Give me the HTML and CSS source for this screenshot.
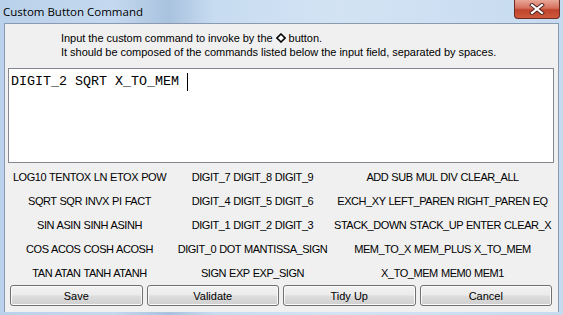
FILE: index.html
```html
<!DOCTYPE html>
<html lang="en">

<head>
    <meta charset="UTF-8">
    <title>Custom Button Command</title>
    <link rel="stylesheet" href="styles.css">
</head>

<body>

    <div class="window">
        <div class="titlebar">
            <span class="title">Custom Button Command</span>
            <div class="close">
                <svg width="16" height="12" viewBox="0 0 16 12">
                    <path d="M3 2 L13 10 M13 2 L3 10" stroke="#4a2020" stroke-width="4" stroke-linecap="square" />
                    <path d="M3 2 L13 10 M13 2 L3 10" stroke="#fff" stroke-width="2.2" stroke-linecap="square" />
                </svg>
            </div>
        </div>

        <div class="client">
            <div class="intro">
                <p>Input the custom command to invoke by the
                    <svg class="diamond" width="10" height="10" viewBox="0 0 10 10">
                        <path d="M5 1 L9 5 L5 9 L1 5 Z" fill="#fff" stroke="#000" stroke-width="1.6" />
                    </svg>
                    button.</p>
                <p>It should be composed of the commands listed below the input field, separated by spaces.</p>
            </div>

            <div class="editor">
                <span class="command">DIGIT_2 SQRT X_TO_MEM </span><span class="caret"></span>
            </div>

            <div class="commands">
                <span>LOG10 TENTOX LN ETOX POW</span>
                <span>DIGIT_7 DIGIT_8 DIGIT_9</span>
                <span>ADD SUB MUL DIV CLEAR_ALL</span>

                <span>SQRT SQR INVX PI FACT</span>
                <span>DIGIT_4 DIGIT_5 DIGIT_6</span>
                <span>EXCH_XY LEFT_PAREN RIGHT_PAREN EQ</span>

                <span>SIN ASIN SINH ASINH</span>
                <span>DIGIT_1 DIGIT_2 DIGIT_3</span>
                <span>STACK_DOWN STACK_UP ENTER CLEAR_X</span>

                <span>COS ACOS COSH ACOSH</span>
                <span>DIGIT_0 DOT MANTISSA_SIGN</span>
                <span>MEM_TO_X MEM_PLUS X_TO_MEM</span>

                <span>TAN ATAN TANH ATANH</span>
                <span>SIGN EXP EXP_SIGN</span>
                <span>X_TO_MEM MEM0 MEM1</span>
            </div>

            <div class="buttons">
                <button type="button">Save</button>
                <button type="button">Validate</button>
                <button type="button">Tidy Up</button>
                <button type="button">Cancel</button>
            </div>
        </div>
    </div>

</body>

</html>
```

FILE: styles.css
```css
body {
    margin: 0;
    padding: 0;
    background-color: #fff;
    font-family: Tahoma, "Liberation Sans", Arial, sans-serif;
}

.window {
    width: 563px;
    height: 315px;
    box-sizing: border-box;
    padding: 0 4px 3px 4px;
    display: flex;
    flex-direction: column;
    background: linear-gradient(90deg, #b9d1ea 0%, #c4d9ef 20%, #a9c2de 30%, #c7dcf1 38%, #d3e3f4 60%, #c6dbf0 100%);
}

.titlebar {
    height: 23px;
    display: flex;
    align-items: flex-start;
    justify-content: space-between;
    margin: 0 -4px 0 -4px;
    padding: 0 3px 0 3px;
}

.title {
    font-family: "Open Sans", "Noto Sans", sans-serif;
    font-size: 11.5px;
    color: #000;
    line-height: 24px;
}

.close {
    width: 46px;
    height: 19px;
    box-sizing: border-box;
    border: 1px solid #6b2a22;
    border-top: none;
    border-radius: 0 0 4px 4px;
    background: linear-gradient(#e9a899 0%, #d5705d 45%, #c0432c 55%, #cd5a3c 100%);
    display: flex;
    align-items: center;
    justify-content: center;
}

.client {
    flex: 1;
    background-color: #f0f0f0;
    border: 1px solid #8a9ab0;
    border-bottom: none;
    padding: 7px 4px 0 3px;
    display: flex;
    flex-direction: column;
}

.intro {
    padding-left: 53px;
    font-size: 11px;
    letter-spacing: -0.03px;
    color: #000;
}

.intro p {
    margin: 0;
    line-height: 14px;
}

.diamond {
    vertical-align: -1px;
}

.editor {
    margin-top: 9px;
    height: 95px;
    box-sizing: border-box;
    border: 1px solid #828790;
    background-color: #fff;
    padding: 4px 2px;
    font-family: "Liberation Mono", "Courier New", monospace;
    font-size: 13.33px;
    display: flex;
    align-items: flex-start;
}

.command {
    white-space: pre;
    line-height: 18px;
}

.caret {
    width: 1px;
    height: 18px;
    background-color: #000;
}

.commands {
    display: grid;
    grid-template-columns: 163px 163px 1fr;
    grid-auto-rows: 24px;
    align-items: center;
    justify-items: center;
    font-size: 11px;
    letter-spacing: -0.45px;
    word-spacing: 0.5px;
    white-space: nowrap;
    color: #000;
    padding-top: 2px;
    padding-right: 4px;
}

.buttons {
    display: flex;
    gap: 4px;
    margin: 0 2px;
}

button {
    flex: 1;
    height: 21px;
    font-family: Tahoma, "Liberation Sans", Arial, sans-serif;
    font-size: 11px;
    color: #000;
    border: 1px solid #707070;
    border-radius: 3px;
    background: linear-gradient(#f2f2f2 0%, #ebebeb 48%, #dddddd 52%, #cfcfcf 100%);
    box-shadow: inset 0 0 0 1px #fbfbfb;
    padding: 0;
}
```
